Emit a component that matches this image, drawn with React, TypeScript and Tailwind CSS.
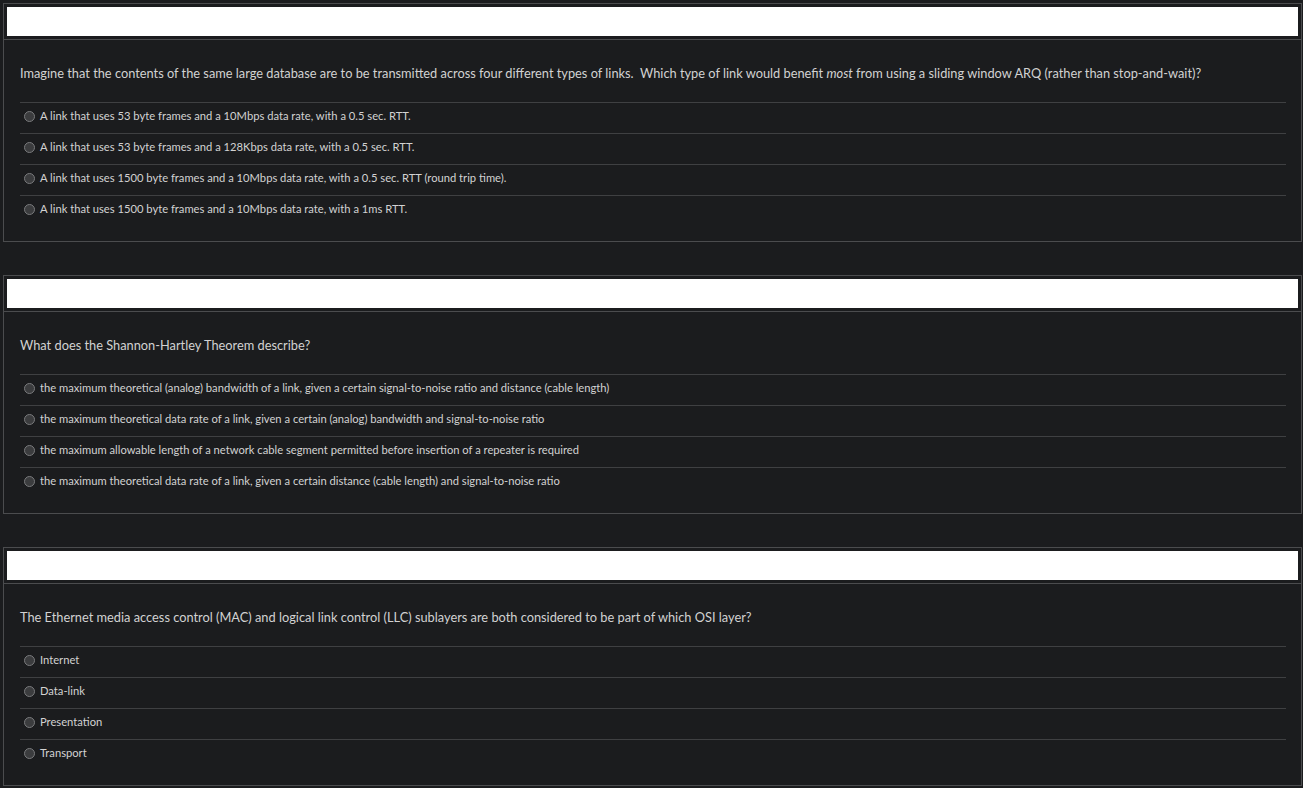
import React from 'react';

type Question = {
  prompt: React.ReactNode;
  options: string[];
};

const questions: Question[] = [
  {
    prompt: (
      <>
        Imagine that the contents of the same large database are to be transmitted across four different types of links.&nbsp; Which type of link
        would benefit <em>most</em> from using a sliding window ARQ (rather than stop-and-wait)?
      </>
    ),
    options: [
      'A link that uses 53 byte frames and a 10Mbps data rate, with a 0.5 sec. RTT.',
      'A link that uses 53 byte frames and a 128Kbps data rate, with a 0.5 sec. RTT.',
      'A link that uses 1500 byte frames and a 10Mbps data rate, with a 0.5 sec. RTT (round trip time).',
      'A link that uses 1500 byte frames and a 10Mbps data rate, with a 1ms RTT.',
    ],
  },
  {
    prompt: 'What does the Shannon-Hartley Theorem describe?',
    options: [
      'the maximum theoretical (analog) bandwidth of a link, given a certain signal-to-noise ratio and distance (cable length)',
      'the maximum theoretical data rate of a link, given a certain (analog) bandwidth and signal-to-noise ratio',
      'the maximum allowable length of a network cable segment permitted before insertion of a repeater is required',
      'the maximum theoretical data rate of a link, given a certain distance (cable length) and signal-to-noise ratio',
    ],
  },
  {
    prompt: 'The Ethernet media access control (MAC) and logical link control (LLC) sublayers are both considered to be part of which OSI layer?',
    options: ['Internet', 'Data-link', 'Presentation', 'Transport'],
  },
];

function Radio() {
  return <span className="inline-block w-[11px] h-[11px] rounded-full bg-[#3b3c3e] border border-[#7a7b7d] shrink-0" />;
}

function QuestionCard({ q }: { q: Question }) {
  return (
    <div className="border border-[#4b4c4e] h-[239px] flex flex-col bg-[#1b1c1e]">
      <div className="p-[3px] border-b border-[#4b4c4e]">
        <div className="h-[29px] bg-white" />
      </div>
      <div className="pl-[16px] pr-[15px] pt-[25px]">
        <p className="text-[12.8px] leading-[16px] text-[#d2d2d2]">{q.prompt}</p>
        <ul className="mt-[21px]">
          {q.options.map((opt) => (
            <li key={opt} className="h-[31px] border-t border-[#3f4042] flex items-center gap-[5px] pl-[4px] pb-[3px]">
              <Radio />
              <span className="text-[11.2px] text-[#d2d2d2]">{opt}</span>
            </li>
          ))}
        </ul>
      </div>
    </div>
  );
}

export default function App() {
  return (
    <div
      className="min-h-screen bg-[#1b1c1e] pl-[3px] pr-[1px] pt-[3px] flex flex-col gap-[33px]"
      style={{ fontFamily: 'Lato, "Open Sans", sans-serif' }}
    >
      {questions.map((q, i) => (
        <QuestionCard key={i} q={q} />
      ))}
    </div>
  );
}
